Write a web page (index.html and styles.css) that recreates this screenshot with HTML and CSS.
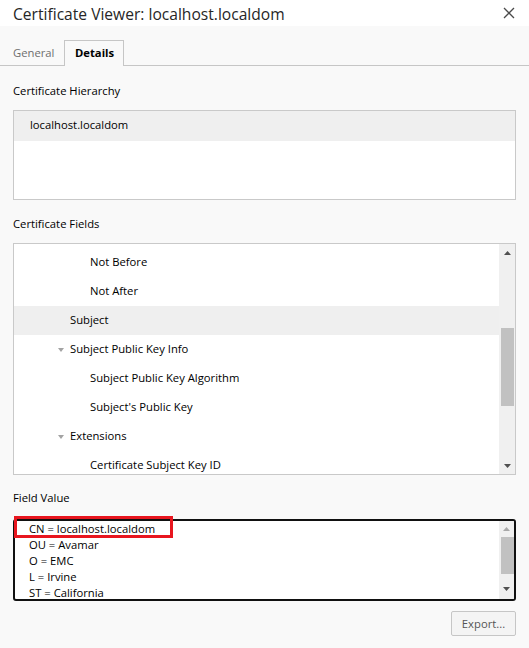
FILE: index.html
```html
<!DOCTYPE html>
<html lang="en">
<head>
<meta charset="utf-8">
<title>Certificate Viewer</title>
<link rel="stylesheet" href="styles.css">
</head>
<body>
<div class="dialog">
  <header class="titlebar">
    <h1 class="title">Certificate Viewer: localhost.localdom</h1>
    <button class="close" aria-label="Close">
      <svg width="12" height="12" viewBox="0 0 12 12"><path d="M1 1 L11 11 M11 1 L1 11" stroke="#4a4a4a" stroke-width="1.3" fill="none"/></svg>
    </button>
  </header>
  <nav class="tabs">
    <div class="tab tab-general">General</div>
    <div class="tab active">Details</div>
  </nav>
  <main class="content">
    <div class="label">Certificate Hierarchy</div>
    <div class="box hierarchy">
      <div class="h-row">localhost.localdom</div>
    </div>

    <div class="label">Certificate Fields</div>
    <div class="box fields">
      <div class="tree">
        <div class="node l3"><span>Not Before</span></div>
        <div class="node l3"><span>Not After</span></div>
        <div class="node l2 selected"><span>Subject</span></div>
        <div class="node l2"><svg class="caret" width="6" height="4" viewBox="0 0 6 4"><polygon points="0,0 6,0 3,4" fill="#a3a3a3"/></svg><span>Subject Public Key Info</span></div>
        <div class="node l3"><span>Subject Public Key Algorithm</span></div>
        <div class="node l3"><span>Subject's Public Key</span></div>
        <div class="node l2"><svg class="caret" width="6" height="4" viewBox="0 0 6 4"><polygon points="0,0 6,0 3,4" fill="#a3a3a3"/></svg><span>Extensions</span></div>
        <div class="node l3"><span>Certificate Subject Key ID</span></div>
      </div>
      <div class="scrollbar">
        <div class="sb-btn up"><svg width="7" height="4" viewBox="0 0 7 4"><polygon points="0,4 7,4 3.5,0" fill="#505050"/></svg></div>
        <div class="sb-track"><div class="thumb"></div></div>
        <div class="sb-btn down"><svg width="7" height="4" viewBox="0 0 7 4"><polygon points="0,0 7,0 3.5,4" fill="#505050"/></svg></div>
      </div>
    </div>

    <div class="label label-value">Field Value</div>
    <div class="value-wrap">
      <div class="value-box">
        <div class="value-lines">
          <div>CN = localhost.localdom</div>
          <div>OU = Avamar</div>
          <div>O = EMC</div>
          <div>L = Irvine</div>
          <div>ST = California</div>
        </div>
        <div class="scrollbar small">
          <div class="sb-btn up"><svg width="7" height="4" viewBox="0 0 7 4"><polygon points="0,4 7,4 3.5,0" fill="#a8a8a8"/></svg></div>
          <div class="sb-track"><div class="thumb"></div></div>
          <div class="sb-btn down"><svg width="7" height="4" viewBox="0 0 7 4"><polygon points="0,0 7,0 3.5,4" fill="#505050"/></svg></div>
        </div>
      </div>
      <div class="highlight"></div>
    </div>

    <div class="actions">
      <button class="export">Export...</button>
    </div>
  </main>
</div>
</body>
</html>
```
FILE: styles.css
```css
* { box-sizing: border-box; }
html, body { margin: 0; padding: 0; }
body {
  width: 529px;
  height: 648px;
  overflow: hidden;
  background: #f9f9f9;
  font-family: "Open Sans", "Noto Sans", sans-serif;
  font-size: 11.25px;
  color: #000;
}

/* title bar */
.titlebar {
  display: flex;
  align-items: flex-start;
  height: 26px;
  padding: 2px 0 0 13px;
  background: #fff;
}
.title {
  flex: 1;
  margin: 0;
  font-size: 15.6px;
  font-weight: 400;
  line-height: 24px;
  color: #262626;
  white-space: nowrap;
}
.close {
  display: flex;
  width: 12px;
  height: 12px;
  margin: 5px 14px 0 0;
  padding: 0;
  border: 0;
  background: none;
}

/* tabs */
.tabs {
  display: flex;
  align-items: flex-start;
  padding-top: 14px;
  border-bottom: 1px solid #c6c6c6;
}
.tab {
  height: 25px;
  line-height: 24px;
  padding: 0 9px 0 10px;
  border: 1px solid transparent;
  border-bottom: 0;
  color: #6e6e6e;
  white-space: nowrap;
}
.tab-general { width: 64px; padding-left: 12px; }
.tab.active {
  height: 26px;
  margin-bottom: -1px;
  border-color: #c6c6c6;
  background: #f9f9f9;
  color: #000;
  font-weight: 700;
}

/* content */
.content { padding: 17px 13px 0; }
.label { line-height: 16px; margin-bottom: 11px; white-space: nowrap; }
.label-value { margin-bottom: 13px; }

.box { background: #fff; border: 1px solid #c9c9c9; }

.hierarchy { height: 90px; margin-bottom: 16px; }
.h-row {
  height: 30px;
  line-height: 28px;
  padding-left: 16px;
  background: #efefef;
}

.fields { height: 232px; display: flex; margin-bottom: 15px; }
.tree { flex: 1; padding-top: 4px; overflow: hidden; }
.node {
  display: flex;
  align-items: flex-start;
  height: 29px;
  line-height: 27px;
  white-space: nowrap;
}
.node.l2 { padding-left: 56px; }
.node.l3 { padding-left: 76px; }
.node.selected { background: #efefef; }
.caret { align-self: center; margin-left: -12px; margin-right: 6px; flex: none; }

/* scrollbars */
.scrollbar {
  width: 16px;
  flex: none;
  display: flex;
  flex-direction: column;
  background: #f0f0f0;
}
.sb-btn {
  height: 17px;
  flex: none;
  display: flex;
  align-items: center;
  padding-left: 5px;
}
.sb-track { flex: 1; }
.thumb {
  margin: 67px 1px 0 2px;
  height: 78px;
  background: #c1c1c1;
}

/* field value */
.value-wrap { position: relative; }
.value-box {
  display: flex;
  height: 82px;
  border: 2px solid #111;
  border-radius: 3px;
  background: #fff;
  overflow: hidden;
}
.value-lines {
  flex: 1;
  padding-left: 14px;
  line-height: 16px;
  overflow: hidden;
  white-space: nowrap;
}
.scrollbar.small { width: 15px; }
.scrollbar.small .sb-btn { height: 16px; padding-left: 4px; }
.scrollbar.small .sb-btn.down { align-items: flex-start; padding-top: 4px; }
.scrollbar.small .thumb { margin: 0 0 0 2px; height: 37px; }

.highlight {
  position: absolute;
  left: 1px;
  top: -3px;
  width: 159px;
  height: 22px;
  border: 3px solid #e8161f;
}

/* actions */
.actions { display: flex; justify-content: flex-end; margin-top: 10px; }
.export {
  width: 65px;
  height: 25px;
  padding: 0;
  border: 1px solid #c6c6c6;
  border-radius: 2px;
  background: #f4f4f4;
  font-family: inherit;
  font-size: inherit;
  line-height: 21px;
  color: #555;
}
```
